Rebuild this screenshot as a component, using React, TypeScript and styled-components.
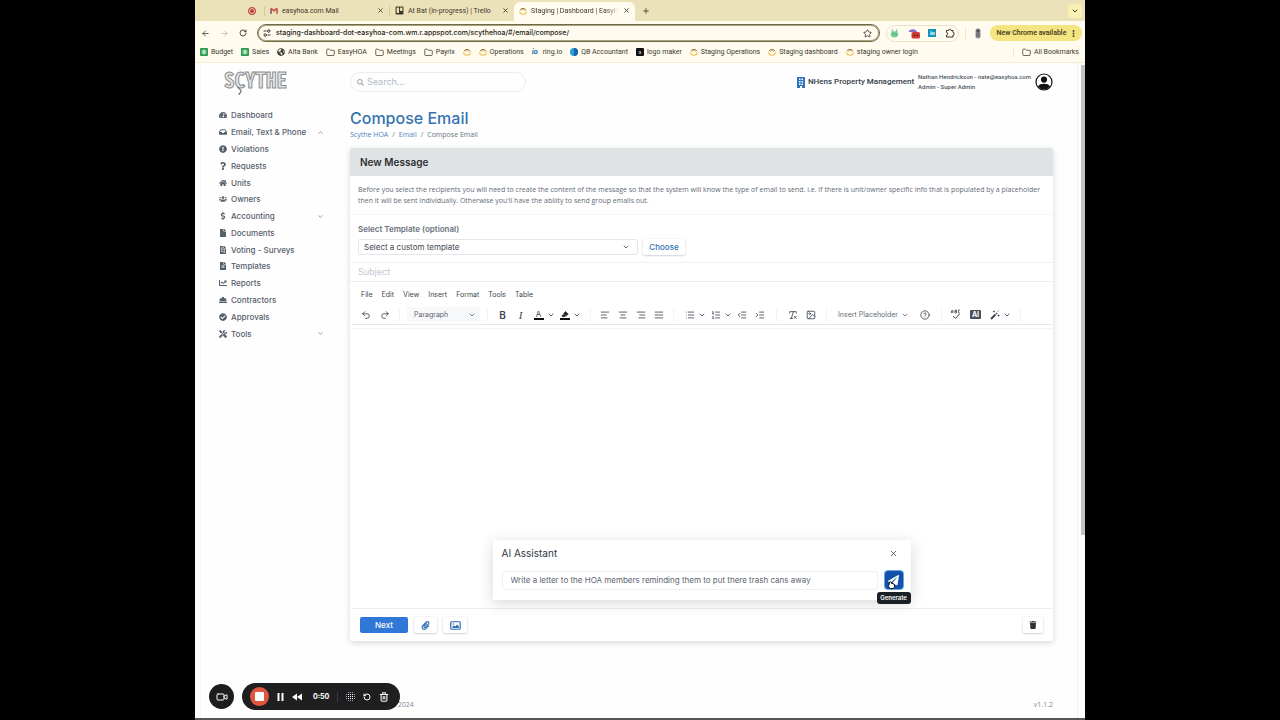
import React from 'react';
import styled, { createGlobalStyle, css } from 'styled-components';
import {
  FaTachometerAlt, FaInbox, FaExclamationCircle, FaQuestion, FaHome, FaUsers, FaDollarSign, FaFile,
  FaFileInvoice, FaFileAlt, FaChartLine, FaHardHat, FaCheckCircle, FaTools, FaSearch, FaPaperPlane,
  FaPaperclip, FaTrash, FaTrello, FaGlobeAmericas,
} from 'react-icons/fa';
import {
  ArrowLeft, ArrowRight, RotateCw, RotateCcw, Star, Folder, X, Plus, ChevronDown, ChevronUp, Undo2, Redo2,
  AlignLeft, AlignCenter, AlignRight, AlignJustify, List, ListOrdered, IndentDecrease, IndentIncrease,
  RemoveFormatting, Image as ImageIcon, CircleHelp, Video, Trash2, EllipsisVertical, Highlighter,
} from 'lucide-react';

const ui = `Inter, "Open Sans", sans-serif`;
const body = `"Open Sans", "Noto Sans", sans-serif`;
const chrome = `Roboto, Inter, sans-serif`;

const Global = createGlobalStyle`
  * { box-sizing: border-box; }
  body { margin: 0; background: #000; font-family: ${ui}; color: #4c5562; }
  button, input, select { font: inherit; color: inherit; margin: 0; }
  button { padding: 0; border: 0; background: none; display: inline-flex; align-items: center; justify-content: center; }
  a { color: inherit; text-decoration: none; }
  svg { flex: none; display: block; }
`;

const Stage = styled.div`
  min-height: 100vh;
  padding: 0 195px;
  display: flex;
  flex-direction: column;
`;
const Window = styled.div`
  position: relative;
  flex: 1;
  display: flex;
  flex-direction: column;
  background: #fefefe;
  border-bottom: 2px solid #55555a;
`;

/* ---------- browser chrome ---------- */
const TabStrip = styled.div`
  height: 21px;
  display: flex;
  align-items: center;
  background: #ebe2b9;
  font: 7px/10px ${chrome};
  color: #3d3a2b;
`;
const RecordSlot = styled.div`
  width: 69px;
  padding-left: 53px;
`;
const RecordDot = styled.div`
  width: 8px;
  height: 8px;
  border: 1px solid #c23a3a;
  border-radius: 50%;
  background: #c23a3a;
  box-shadow: inset 0 0 0 1px #ebe2b9;
`;
const Tab = styled.div<{ $active?: boolean }>`
  width: ${p => (p.$active ? 121 : 125)}px;
  height: 10px;
  ${p => p.$active && css`align-self: flex-end; height: 19px; background: #fffbee; border-radius: 6px 6px 0 0; padding-bottom: 2px;`}
  ${p => !p.$active && css`border-left: 1px solid #d3caa2;`}
  padding-left: 5px;
  padding-right: 5px;
  display: flex;
  align-items: center;
  gap: 4px;
`;
const TabTitle = styled.span<{ $fade?: boolean }>`
  flex: 1;
  min-width: 0;
  overflow: hidden;
  white-space: nowrap;
  ${p => p.$fade && css`mask-image: linear-gradient(90deg, #000 85%, transparent);`}
`;
const NewTab = styled.button`
  margin-left: 7px;
`;
const TabMenu = styled.button`
  margin-left: auto;
  margin-right: 3px;
  width: 14px;
  height: 14px;
  border-radius: 4px;
  background: #fbf0b4;
`;
const Toolbar = styled.div`
  height: 24px;
  padding: 0 3px 0 6px;
  display: flex;
  align-items: center;
  background: #fffbee;
  font: 7px/10px ${chrome};
  color: #33312a;
`;
const NavButtons = styled.div`
  display: flex;
  gap: 10px;
  width: 56px;
`;
const AddressBar = styled.div`
  flex: 1;
  height: 18px;
  display: flex;
  align-items: center;
  gap: 5px;
  padding: 0 7px 0 5px;
  border: 1px solid #6f6b45;
  box-shadow: inset 0 0 0 1px #a8a483;
  border-radius: 9px;
  color: #222;
`;
const AddressInput = styled.input`
  flex: 1;
  min-width: 0;
  border: 0;
  padding: 0;
  outline: 0;
  background: none;
  font: 500 7px/10px ${ui};
`;
const Extensions = styled.div`
  width: 73px;
  height: 17px;
  margin-left: 6px;
  padding: 0 3px;
  display: flex;
  align-items: center;
  justify-content: space-between;
  border: 1px solid #e8e3c8;
  border-radius: 9px;
`;
const IoBadge = styled.span`
  width: 8px;
  height: 8px;
  background: #1593b8;
  color: #fff;
  font: italic 700 6px/8px ${chrome};
  text-align: center;
`;
const Avatar = styled.div`
  margin: 0 8px 0 6px;
  padding-left: 8px;
  border-left: 1px solid #ece5bf;
`;
const UpdateButton = styled.button`
  height: 16px;
  width: 92px;
  gap: 3px;
  padding-left: 3px;
  border-radius: 8px;
  background: #f4e482;
  color: #3a3417;
  font-weight: 500;
`;
const Bookmarks = styled.nav`
  height: 18px;
  padding: 0 6px 3px 5px;
  display: flex;
  align-items: center;
  gap: 8px;
  background: #fffbee;
  border-bottom: 1px solid #f6ecd4;
  font: 7px/10px ${chrome};
  color: #3b3930;
`;
const Bookmark = styled.a<{ $last?: boolean }>`
  display: flex;
  align-items: center;
  gap: 3px;
  white-space: nowrap;
  ${p => p.$last && css`margin-left: auto; padding-left: 8px; border-left: 1px solid #eee7c8;`}
`;
const MakerBadge = styled.span`
  width: 8px;
  height: 8px;
  border-radius: 1px;
  background: #111;
  color: #ddd;
  font: 5px/8px ${chrome};
  text-align: center;
`;
const RingBadge = styled.span`
  width: 8px;
  color: #1c6fb0;
  font: italic 700 7px/8px ${ui};
`;

/* ---------- page ---------- */
const Page = styled.div`
  flex: 1;
  display: flex;
  padding: 0 3px 0 5px;
`;
const Sidebar = styled.aside`
  width: 150px;
  padding: 5px 26px 0 18px;
  border-left: 1px solid #f5f6f8;
`;
const LogoLink = styled.a`
  display: block;
  padding-left: 5px;
  margin-bottom: 11px;
`;
const NavList = styled.ul`
  list-style: none;
  margin: 0;
  padding: 0;
  display: grid;
  grid-auto-rows: 1fr;
  min-height: 235px;
  font: 500 8px/12px ${ui};
  color: #56606d;
`;
const NavLink = styled.a`
  height: 100%;
  display: flex;
  align-items: center;
  gap: 4px;
  svg:last-of-type:not(:first-child) { margin-left: auto; }
`;
const Main = styled.main`
  flex: 1;
  min-width: 0;
  padding-right: 24px;
  display: flex;
  flex-direction: column;
`;
const TopBar = styled.header`
  display: flex;
  align-items: center;
  justify-content: space-between;
  padding-top: 9px;
`;
const SearchBox = styled.label`
  width: 176px;
  height: 20px;
  display: flex;
  align-items: center;
  gap: 3px;
  padding: 0 6px;
  border: 1px solid #e9ecf1;
  border-radius: 10px;
  color: #a5acb6;
`;
const SearchInput = styled.input`
  flex: 1;
  min-width: 0;
  border: 0;
  padding: 0;
  outline: 0;
  background: none;
  font: 9px/12px ${ui};
  &::placeholder { color: #b4bac4; opacity: 1; }
`;
const Account = styled.div`
  display: flex;
  align-items: center;
`;
const Company = styled.span`
  margin: 0 4px 0 3px;
  font: 500 8px/12px ${chrome};
  color: #333b47;
`;
const UserInfo = styled.div`
  margin-right: 4px;
  font: 500 6px/10px ${chrome};
  color: #4d5561;
  white-space: nowrap;
`;
const Title = styled.h1`
  margin: 14px 0 0;
  font: 500 16px/24px ${ui};
  color: #3673b0;
`;
const Crumbs = styled.nav`
  display: flex;
  gap: 4px;
  margin-bottom: 8px;
  font: 7px/10px ${body};
  color: #69727f;
  a { color: #4a86bd; }
`;
const Card = styled.section`
  border-radius: 3px;
  background: #fff;
  box-shadow: 0 2px 6px rgba(40, 50, 70, 0.18);
`;
const CardHeader = styled.h2`
  margin: 0;
  padding: 0 10px;
  font: 600 10px/28px ${ui};
  color: #2c3036;
  background: #dfe3e4;
  border-radius: 3px 3px 0 0;
`;
const Intro = styled.p`
  margin: 0;
  padding: 8px 8px;
  height: 39px;
  font: 7px/11px ${body};
  color: #626b77;
  border-bottom: 1px solid #f4f5f6;
`;
const TemplateBlock = styled.div`
  padding: 8px 8px 7px;
  border-bottom: 1px solid #f1f2f4;
  font: 8px/12px ${ui};
`;
const FieldLabel = styled.label`
  display: block;
  margin-bottom: 4px;
  font-weight: 600;
  color: #6a727e;
`;
const FieldRow = styled.div`
  display: flex;
  align-items: center;
  gap: 5px;
`;
const SelectWrap = styled.div`
  position: relative;
  width: 280px;
  svg { position: absolute; right: 8px; top: 4px; pointer-events: none; }
`;
const Select = styled.select`
  appearance: none;
  width: 100%;
  height: 16px;
  padding: 0 5px;
  border: 1px solid #e4e7eb;
  border-radius: 2px;
  background: #fff;
  color: #3f4650;
`;
const SoftButton = styled.button<{ $w: number; $tone?: string }>`
  width: ${p => p.$w}px;
  height: 16px;
  border-radius: 2px;
  background: #fff;
  color: ${p => p.$tone ?? '#2f6fb2'};
  font: 500 8px/12px ${ui};
  box-shadow: 0 0 2px rgba(40, 50, 70, 0.12), 0 1px 2px rgba(40, 50, 70, 0.18);
`;
const Subject = styled.input`
  display: block;
  width: 100%;
  height: 19px;
  padding: 0 8px 1px;
  border: 0;
  border-bottom: 1px solid #eceef0;
  outline: 0;
  background: none;
  font: 9px/12px ${ui};
  &::placeholder { color: #c3c8cf; opacity: 1; }
`;
const Editor = styled.div`
  position: relative;
  margin: 0 1px;
  font: 7px/10px ${ui};
  color: #3c4550;
`;
const MenuBar = styled.div`
  display: flex;
  gap: 9px;
  padding: 8px 10px 5px;
`;
const Tools = styled.div`
  display: flex;
  align-items: center;
  height: 20px;
  border-bottom: 1px solid #e6e9ec;
`;
const Group = styled.div<{ $gap?: number; $w: number }>`
  display: flex;
  align-items: center;
  justify-content: center;
  gap: ${p => p.$gap ?? 8}px;
  width: ${p => p.$w}px;
  height: 14px;
  border-right: 1px solid #f3f4f6;
`;
const Cluster = styled.span`
  display: inline-flex;
  align-items: center;
  gap: 5px;
`;
const Split = styled.span`
  display: inline-flex;
  align-items: center;
  gap: 3px;
`;
const ParagraphButton = styled.button`
  width: 73px;
  height: 15px;
  padding: 0 4px 0 7px;
  justify-content: space-between;
  border-radius: 2px;
  background: #f7f8f9;
  color: #5d6570;
`;
const PlaceholderButton = styled.button`
  gap: 3px;
  color: #646d79;
  white-space: nowrap;
`;
const Glyph = styled.button<{ $italic?: boolean }>`
  width: 10px;
  font: ${p => (p.$italic ? 'italic 400 11px/12px "Liberation Serif", serif' : `600 10px/12px ${ui}`)};
`;
const InkButton = styled.button`
  width: 10px;
  height: 10px;
  border-bottom: 2px solid #111;
  font: 8px/8px ${ui};
`;
const AiBadge = styled.button`
  width: 11px;
  height: 9px;
  border-radius: 1px;
  background: #48515e;
  color: #fff;
  font: 700 7px/8px ${ui};
`;
const Canvas = styled.div`
  height: 281px;
  border-top: 1px solid #f1f2f4;
  margin-top: 3px;
  border-bottom: 1px solid #eceef0;
`;
const Assistant = styled.div`
  position: absolute;
  left: 50%;
  bottom: 9px;
  width: 418px;
  margin-left: -209px;
  padding: 7px 7px 10px 9px;
  background: #fff;
  box-shadow: 0 3px 14px rgba(30, 40, 50, 0.18);
`;
const AssistantHead = styled.div`
  display: flex;
  align-items: center;
  justify-content: space-between;
  padding-right: 6px;
  margin-bottom: 11px;
  font: 10px/12px ${ui};
  color: #2f3640;
`;
const AssistantRow = styled.div`
  display: flex;
  align-items: center;
  gap: 6px;
`;
const Prompt = styled.input`
  flex: 1;
  min-width: 0;
  height: 19px;
  padding: 0 8px;
  border: 1px solid #eef0f2;
  border-radius: 3px;
  outline: 0;
  font: 8px/12px ${ui};
  color: #5c6570;
`;
const Send = styled.button`
  position: relative;
  width: 20px;
  height: 20px;
  border: 1px solid #6aa5ea;
  border-radius: 4px;
  background: #1252a8;
  color: #fff;
`;
const Pointer = styled.svg`
  position: absolute;
  left: 3px;
  top: 9px;
`;
const Tip = styled.div`
  position: absolute;
  right: 0;
  top: 52px;
  width: 34px;
  border-radius: 3px;
  background: #1b1f26;
  color: #fff;
  font: 600 6px/12px ${ui};
  text-align: center;
`;
const CardFooter = styled.div`
  display: flex;
  align-items: center;
  gap: 6px;
  padding: 8px 10px;
`;
const NextButton = styled.button`
  width: 48px;
  height: 16px;
  border-radius: 2px;
  background: #2f78d8;
  color: #fff;
  font: 500 8px/12px ${ui};
`;
const Push = styled.span`
  flex: 1;
`;
const PageFooter = styled.footer`
  display: flex;
  justify-content: space-between;
  margin-top: auto;
  padding: 0 0 7px;
  font: 7px/12px ${body};
  color: #7f8791;
`;
const ScrollTrack = styled.div`
  width: 8px;
  margin-right: -3px;
  padding: 2px 0 0 3px;
  border-left: 1px solid #f0f0f0;
`;
const ScrollThumb = styled.div`
  height: 72%;
  background: #c3c3c3;
`;

/* ---------- screen recorder overlay ---------- */
const Recorder = styled.div`
  position: absolute;
  left: 14px;
  bottom: 8px;
  display: flex;
  align-items: center;
  gap: 8px;
  color: #fff;
`;
const Camera = styled.button`
  width: 25px;
  height: 25px;
  border-radius: 50%;
  background: #1d1d1f;
`;
const RecorderPill = styled.div`
  display: flex;
  align-items: center;
  gap: 8px;
  height: 27px;
  padding: 0 11px 0 8px;
  border-radius: 14px;
  background: #1f1f21;
  font: 700 7px/10px ${ui};
`;
const Stop = styled.button`
  width: 19px;
  height: 19px;
  border-radius: 50%;
  background: #e0563f;
`;
const StopSquare = styled.span`
  width: 9px;
  height: 9px;
  border-radius: 1px;
  background: #fff;
`;
const Timer = styled.span`
  padding: 0 8px 0 3px;
  border-right: 1px solid #3b3b3e;
`;

const Ring = () => (
  <svg width="8" height="8" viewBox="0 0 16 16" fill="none">
    <path d="M2 6.500a6.500 6 0 0 1 12 0" stroke="#8d7a4a" strokeWidth="2" />
    <path d="M5 7.500a3 3 0 0 1 6 0" stroke="#e2a93a" strokeWidth="1.600" />
    <path d="M1.500 8.500a6.500 6 0 0 0 13 0" stroke="#eec04a" strokeWidth="2.200" />
  </svg>
);
const Sheet = () => (
  <svg width="8" height="8" viewBox="0 0 16 16">
    <rect width="16" height="16" rx="2" fill="#2b9d4f" />
    <path d="M8 3v10M3 6h10M3 10h10" stroke="#fff" strokeWidth="1.8" />
  </svg>
);
const Mail = () => (
  <svg width="8" height="7" viewBox="0 0 16 13" fill="none" strokeWidth="3">
    <path d="M2 13V3" stroke="#7a4a6a" />
    <path d="M2 2l6 5 6-5" stroke="#d0453a" />
    <path d="M14 13V3" stroke="#b8434a" />
  </svg>
);
const Tune = () => (
  <svg width="8" height="8" viewBox="0 0 16 16" fill="none" stroke="#222" strokeWidth="1.800">
    <path d="M1 4h6M9 12h6" /><circle cx="11.500" cy="4" r="2.500" /><circle cx="4.500" cy="12" r="2.500" />
  </svg>
);
const Extension = () => (
  <svg width="10" height="10" viewBox="0 0 20 20" fill="none" stroke="#33312a" strokeWidth="2">
    <path d="M3 5h4a2.500 2.500 0 0 1 5 0h4v4a2.500 2.500 0 0 1 0 5v4H3v-4a2.500 2.500 0 0 0 0-5z" strokeLinejoin="round" />
  </svg>
);
const Building = () => (
  <svg width="8" height="11" viewBox="0 0 16 22">
    <path d="M0 0h16v22h-6v-4H6v4H0z" fill="#2f72bd" />
    <path d="M4 3h3v3H4zM9 3h3v3H9zM4 8h3v3H4zM9 8h3v3H9zM4 13h3v3H4zM9 13h3v3H9z" fill="#fff" />
  </svg>
);
const Person = () => (
  <svg width="18" height="18" viewBox="0 0 18 18">
    <circle cx="9" cy="9" r="8" fill="#fff" stroke="#111" strokeWidth="1.2" />
    <circle cx="9" cy="6.6" r="3.1" fill="#111" />
    <path d="M2.900 13.600C4.200 11.400 6.200 10.800 9 10.800s4.800.6 6.100 2.800A7.700 7.700 0 0 1 2.900 13.600z" fill="#111" />
  </svg>
);
const Logo = () => (
  <svg width="64" height="28" viewBox="0 0 64 28" role="img" aria-label="Scythe">
    <text x="0" y="20" fontFamily='"Noto Sans Mono CJK SC", "Noto Sans CJK SC", monospace' fontSize="21" fontWeight="700" fill="#e4e4e5" stroke="#8d8f92" strokeWidth="1">
      SCYTHE
    </text>
    <path d="M14 19c0 2 3 2 3 4s-2 2-2 4" fill="none" stroke="#77797c" strokeWidth="1.400" />
  </svg>
);
const Photo = () => (
  <svg width="11" height="9" viewBox="0 0 22 18" fill="none" stroke="#2f6fb2" strokeWidth="2.400">
    <rect x="1.500" y="1.500" width="19" height="15" rx="2" />
    <path d="M5 14v-3l3-2 3 2 3-4 4 4v3z" fill="#2f6fb2" stroke="none" />
    <circle cx="6.500" cy="6" r="1.500" fill="#2f6fb2" stroke="none" />
  </svg>
);
const Spelling = () => (
  <svg width="10" height="11" viewBox="0 0 20 22" fill="none" stroke="#3c4550" strokeWidth="1.500">
    <path d="M1 8V4l1.500-2L4 4v4M1 6h3M8 2v6h3V2H8M8 5h3M18 2h-3v6h3" />
    <path d="M4 14l5 5 8-9" strokeWidth="2" />
  </svg>
);
const Wand = () => (
  <svg width="10" height="10" viewBox="0 0 20 20" fill="none" stroke="#3c4550">
    <path d="M2 18L11 9" strokeWidth="4" />
    <path d="M12 8l2-2" strokeWidth="3" />
    <path d="M8 1v4M6 3h4M17 9v4M15 11h4M17 1l-2 2" strokeWidth="1.500" />
  </svg>
);
const Dots = () => (
  <svg width="9" height="9" viewBox="0 0 9 9" fill="#fff">
    {[0, 2, 4, 6, 8].map(y => [0, 2, 4, 6, 8].map(x => (
      (x % 8 !== 0 || y % 8 !== 0) && <rect key={`${x}-${y}`} x={x} y={y} width="1" height="1" opacity={x % 8 === 0 || y % 8 === 0 ? 0.6 : 1} />
    )))}
  </svg>
);
const Android = () => (
  <svg width="9" height="10" viewBox="0 0 18 20">
    <path d="M4 1l3 6h4l3-6 1 8c3 3 2 10-6 10S0 12 3 9z" fill="#74cf92" />
    <circle cx="6" cy="12" r="1.200" fill="#2c7a4a" /><circle cx="12" cy="12" r="1.200" fill="#2c7a4a" />
  </svg>
);
const PurpleExt = () => (
  <svg width="12" height="12" viewBox="0 0 24 24">
    <path d="M1 10a9 8 0 0 1 17 0z" fill="#8d69c9" />
    <rect x="7" y="10" width="17" height="13" rx="3" fill="#d23b34" />
    <path d="M11 17h3M17 17h3" stroke="#5a1512" strokeWidth="3" />
  </svg>
);
const Portrait = () => (
  <svg width="8" height="11" viewBox="0 0 16 22">
    <rect x="3" y="1" width="10" height="20" rx="4" fill="#9a959b" />
    <circle cx="8" cy="6" r="3.500" fill="#55505a" />
    <path d="M4 12h8M4 16h8" stroke="#5d5862" strokeWidth="2" />
  </svg>
);
const Blob = () => (
  <svg width="8" height="8" viewBox="0 0 16 16">
    <circle cx="8" cy="8" r="8" fill="#2a9ed6" />
    <path d="M8 0a8 8 0 0 1 0 16z" fill="#1763ae" />
  </svg>
);
const Rewind = () => (
  <svg width="10" height="8" viewBox="0 0 20 16" fill="#fff"><path d="M10 1v14L0 8zM20 1v14L10 8z" /></svg>
);
const Pause = () => (
  <svg width="7" height="8" viewBox="0 0 14 16" fill="#fff"><path d="M1 0h4v16H1zM9 0h4v16H9z" /></svg>
);

const nav: [string, React.ComponentType<{ size?: number }>, ('up' | 'down')?][] = [
  ['Dashboard', FaTachometerAlt], ['Email, Text & Phone', FaInbox, 'up'], ['Violations', FaExclamationCircle],
  ['Requests', FaQuestion], ['Units', FaHome], ['Owners', FaUsers], ['Accounting', FaDollarSign, 'down'],
  ['Documents', FaFile], ['Voting - Surveys', FaFileInvoice], ['Templates', FaFileAlt], ['Reports', FaChartLine],
  ['Contractors', FaHardHat], ['Approvals', FaCheckCircle], ['Tools', FaTools, 'down'],
];
const bookmarks: [string, React.ReactNode][] = [
  ['Budget', <Sheet />], ['Sales', <Sheet />], ['Alta Bank', <FaGlobeAmericas size={8} />],
  ['EasyHOA', <Folder size={9} />], ['Meetings', <Folder size={9} />], ['Payrix', <Folder size={9} />],
  ['', <Ring />], ['Operations', <Ring />], ['ring.io', <RingBadge>io</RingBadge>], ['QB Accountant', <Blob />],
  ['logo maker', <MakerBadge>a</MakerBadge>], ['Staging Operations', <Ring />], ['Staging dashboard', <Ring />],
  ['staging owner login', <Ring />],
];
const Caret = () => <ChevronDown size={8} strokeWidth={2.5} />;

export default function App() {
  return (
    <Stage>
      <Global />
      <Window>
        <TabStrip>
          <RecordSlot><RecordDot /></RecordSlot>
          <Tab><Mail /><TabTitle>easyhoa.com Mail</TabTitle><X size={7} strokeWidth={3} /></Tab>
          <Tab><FaTrello size={9} /><TabTitle>At Bat (in-progress) | Trello</TabTitle><X size={7} strokeWidth={3} /></Tab>
          <Tab $active><Ring /><TabTitle $fade>Staging | Dashboard | EasyHO</TabTitle><X size={7} strokeWidth={3} /></Tab>
          <NewTab aria-label="New tab"><Plus size={8} strokeWidth={2.5} /></NewTab>
          <TabMenu aria-label="Search tabs"><ChevronDown size={8} strokeWidth={3} /></TabMenu>
        </TabStrip>
        <Toolbar>
          <NavButtons>
            <button aria-label="Back"><ArrowLeft size={9} /></button>
            <button aria-label="Forward"><ArrowRight size={9} color="#b9b5a4" /></button>
            <button aria-label="Reload"><RotateCw size={8} strokeWidth={2.5} /></button>
          </NavButtons>
          <AddressBar>
            <Tune />
            <AddressInput aria-label="Address" defaultValue="staging-dashboard-dot-easyhoa-com.wm.r.appspot.com/scythehoa/#/email/compose/" />
            <Star size={9} />
          </AddressBar>
          <Extensions><Android /><PurpleExt /><IoBadge>io</IoBadge><Extension /></Extensions>
          <Avatar><Portrait /></Avatar>
          <UpdateButton>New Chrome available<EllipsisVertical size={9} strokeWidth={3} /></UpdateButton>
        </Toolbar>
        <Bookmarks aria-label="Bookmarks">
          {bookmarks.map(([label, icon], i) => <Bookmark href="#" key={i}>{icon}{label}</Bookmark>)}
          <Bookmark href="#" $last><Folder size={9} />All Bookmarks</Bookmark>
        </Bookmarks>

        <Page>
          <Sidebar>
            <LogoLink href="#"><Logo /></LogoLink>
            <NavList>
              {nav.map(([label, Icon, state]) => (
                <li key={label}>
                  <NavLink href="#">
                    <Icon size={8} />{label}
                    {state === 'up' && <ChevronUp size={7} />}
                    {state === 'down' && <ChevronDown size={7} />}
                  </NavLink>
                </li>
              ))}
            </NavList>
          </Sidebar>
          <Main>
            <TopBar>
              <SearchBox><FaSearch size={7} /><SearchInput aria-label="Search" placeholder="Search..." /></SearchBox>
              <Account>
                <Building />
                <Company>NHens Property Management</Company>
                <UserInfo>Nathan Hendrickson - nate@easyhoa.com<br />Admin - Super Admin</UserInfo>
                <Person />
              </Account>
            </TopBar>
            <Title>Compose Email</Title>
            <Crumbs aria-label="Breadcrumb">
              <a href="#">Scythe HOA</a><span>/</span><a href="#">Email</a><span>/</span><span>Compose Email</span>
            </Crumbs>
            <Card>
              <CardHeader>New Message</CardHeader>
              <Intro>
                Before you select the recipients you will need to create the content of the message so that the system will know the type of email to send. i.e. If there is unit/owner specific info that is populated by a placeholder then it will be sent individually. Otherwise you'll have the ability to send group emails out.
              </Intro>
              <TemplateBlock>
                <FieldLabel htmlFor="template">Select Template (optional)</FieldLabel>
                <FieldRow>
                  <SelectWrap>
                    <Select id="template"><option>Select a custom template</option></Select>
                    <ChevronDown size={8} strokeWidth={2.5} />
                  </SelectWrap>
                  <SoftButton $w={42}>Choose</SoftButton>
                </FieldRow>
              </TemplateBlock>
              <Subject aria-label="Subject" placeholder="Subject" />
              <Editor>
                <MenuBar>
                  {['File', 'Edit', 'View', 'Insert', 'Format', 'Tools', 'Table'].map(m => <button key={m}>{m}</button>)}
                </MenuBar>
                <Tools>
                  <Group $w={49} $gap={9}>
                    <button aria-label="Undo"><Undo2 size={10} /></button>
                    <button aria-label="Redo"><Redo2 size={10} /></button>
                  </Group>
                  <Group $w={88}><ParagraphButton>Paragraph<Caret /></ParagraphButton></Group>
                  <Group $w={103}>
                    <Glyph>B</Glyph><Glyph $italic>I</Glyph>
                    <Cluster>
                      <Split><InkButton>A</InkButton><Caret /></Split>
                      <Split><InkButton aria-label="Highlight"><Highlighter size={8} fill="#222" /></InkButton><Caret /></Split>
                    </Cluster>
                  </Group>
                  <Group $w={83}>
                    <AlignLeft size={10} /><AlignCenter size={10} /><AlignRight size={10} /><AlignJustify size={10} />
                  </Group>
                  <Group $w={103}>
                    <Cluster>
                      <Split><List size={10} /><Caret /></Split>
                      <Split><ListOrdered size={10} /><Caret /></Split>
                      <IndentDecrease size={10} />
                    </Cluster>
                    <IndentIncrease size={10} />
                  </Group>
                  <Group $w={50}><RemoveFormatting size={10} /><ImageIcon size={10} /></Group>
                  <Group $w={115} $gap={11}>
                    <PlaceholderButton>Insert Placeholder<Caret /></PlaceholderButton>
                    <CircleHelp size={10} />
                  </Group>
                  <Group $w={79} $gap={9}>
                    <Spelling /><AiBadge>AI</AiBadge>
                    <Split><Wand /><Caret /></Split>
                  </Group>
                </Tools>
                <Canvas />
                <Assistant role="dialog" aria-label="AI Assistant">
                  <AssistantHead>AI Assistant<button aria-label="Close"><X size={9} /></button></AssistantHead>
                  <AssistantRow>
                    <Prompt aria-label="Prompt" defaultValue="Write a letter to the HOA members reminding them to put there trash cans away" />
                    <Send aria-label="Generate">
                      <FaPaperPlane size={11} />
                      <Pointer width="8" height="9" viewBox="0 0 16 18"><path d="M5 17c-4-3-5-6-3-7l1-6c2-2 3 0 3 2l6 2c2 2 1 7-1 9z" fill="#fff" stroke="#111" strokeWidth="2" /></Pointer>
                    </Send>
                  </AssistantRow>
                  <Tip role="tooltip">Generate</Tip>
                </Assistant>
              </Editor>
              <CardFooter>
                <NextButton>Next</NextButton>
                <SoftButton $w={23} aria-label="Attach file"><FaPaperclip size={9} /></SoftButton>
                <SoftButton $w={24} aria-label="Insert image"><Photo /></SoftButton>
                <Push />
                <SoftButton $w={20} $tone="#2f3338" aria-label="Delete"><FaTrash size={8} /></SoftButton>
              </CardFooter>
            </Card>
            <PageFooter><span>© Scythe HOA 2024</span><span>v1.1.2</span></PageFooter>
          </Main>
          <ScrollTrack><ScrollThumb /></ScrollTrack>
        </Page>

        <Recorder>
          <Camera aria-label="Camera"><Video size={12} /></Camera>
          <RecorderPill>
            <Stop aria-label="Stop"><StopSquare /></Stop>
            <button aria-label="Pause"><Pause /></button>
            <button aria-label="Rewind"><Rewind /></button>
            <Timer>0:50</Timer>
            <button aria-label="Effects"><Dots /></button>
            <button aria-label="Restart"><RotateCcw size={8} strokeWidth={3} /></button>
            <button aria-label="Discard"><Trash2 size={10} strokeWidth={2.5} /></button>
          </RecorderPill>
        </Recorder>
      </Window>
    </Stage>
  );
}
